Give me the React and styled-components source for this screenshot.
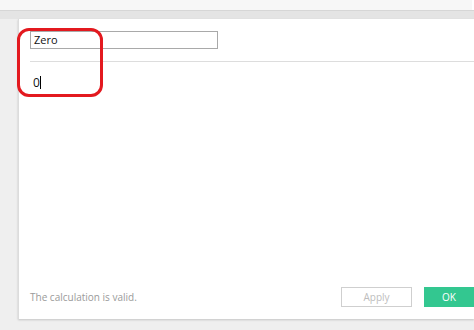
import styled, { createGlobalStyle } from "styled-components";

const GlobalStyle = createGlobalStyle`
  html, body {
    margin: 0;
    padding: 0;
    width: 474px;
    height: 330px;
    overflow: hidden;
    background: #ececec;
    font-family: "Open Sans", "Noto Sans", sans-serif;
  }
`;

const Page = styled.div`
  display: flex;
  flex-direction: column;
  width: 474px;
  height: 330px;
`;

const TopStrip = styled.div`
  height: 10px;
  background: #f7f7f7;
  border-right: 2px solid #ffffff;
`;

const TitleBand = styled.div`
  height: 8px;
  background: #e4e4e4;
  border-top: 1px solid #d6d6d6;
`;

const Body = styled.div`
  display: flex;
  flex: 1;
  padding-left: 18px;
  padding-bottom: 11px;
  background: #efefef;
`;

const Panel = styled.div`
  position: relative;
  flex: 1;
  display: flex;
  flex-direction: column;
  background: #ffffff;
  border-left: 1px solid #dcdcdc;
  box-shadow: 0 1px 2px rgba(0, 0, 0, 0.18);
`;

const NameRow = styled.div`
  padding: 12px 0 0 11px;
  height: 30px;
`;

const NameInput = styled.div`
  width: 183px;
  height: 16px;
  border: 1px solid #a9a9a9;
  font-size: 11px;
  line-height: 16px;
  padding-left: 3px;
  color: #111;
`;

const Divider = styled.div`
  height: 1px;
  background: #dddddd;
  margin-left: 11px;
`;

const Formula = styled.div`
  flex: 1;
  padding: 12px 0 0 14px;
  font-size: 12px;
  color: #111;
  display: flex;
  align-items: flex-start;
`;

const Caret = styled.span`
  display: inline-block;
  width: 1px;
  height: 13px;
  background: #000;
  margin-top: 2px;
`;

const Footer = styled.div`
  display: flex;
  align-items: center;
  padding: 0 0 11px 11px;
  height: 22px;
`;

const Status = styled.span`
  flex: 1;
  font-size: 10px;
  color: #9a9a9a;
`;

const Button = styled.div`
  display: flex;
  align-items: center;
  justify-content: center;
  height: 20px;
  font-size: 10px;
  box-sizing: border-box;
  width: ${(p) => p.$width}px;
  margin-left: ${(p) => p.$gap}px;
  background: ${(p) => (p.$primary ? "#33c790" : "#ffffff")};
  color: ${(p) => (p.$primary ? "#ffffff" : "#bdbdbd")};
  border: 1px solid ${(p) => (p.$primary ? "#33c790" : "#cfcfcf")};
`;

const Highlight = styled.div`
  position: absolute;
  left: -2px;
  top: 9px;
  width: 80px;
  height: 63px;
  border: 3px solid #e3191f;
  border-radius: 12px;
  pointer-events: none;
`;

export default function App() {
  return (
    <>
      <GlobalStyle />
      <Page>
        <TopStrip />
        <TitleBand />
        <Body>
          <Panel>
            <NameRow>
              <NameInput>Zero</NameInput>
            </NameRow>
            <Divider />
            <Formula>
              0<Caret />
            </Formula>
            <Footer>
              <Status>The calculation is valid.</Status>
              <Button $width={71} $gap={0}>Apply</Button>
              <Button $width={50} $gap={12} $primary>OK</Button>
            </Footer>
            <Highlight />
          </Panel>
        </Body>
      </Page>
    </>
  );
}
